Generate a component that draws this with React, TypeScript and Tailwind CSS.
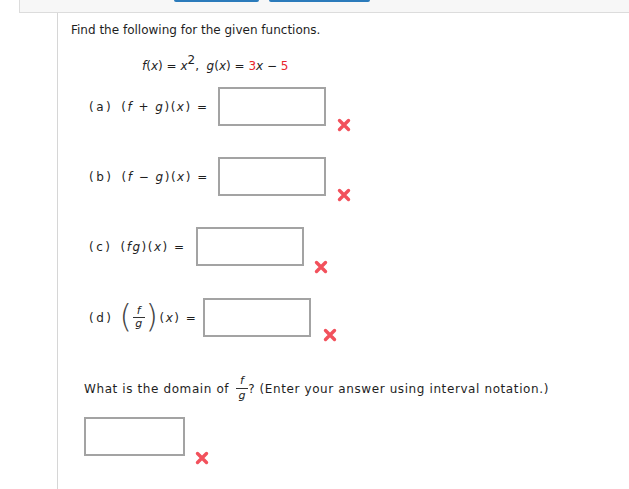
import React from "react";

// Worksheet question: function operations

function WrongMark() {
  return (
    <svg width="14" height="14" viewBox="0 0 14 14" className="shrink-0">
      <path d="M2.5 2.5 L11.5 11.5 M11.5 2.5 L2.5 11.5" stroke="#f2515c" strokeWidth="3.4" strokeLinecap="round" />
    </svg>
  );
}

function AnswerBox({ w = "w-[108px]" }: { w?: string }) {
  return <div className={`${w} h-[39px] border-2 border-[#a3a3a3] bg-white`} />;
}

function Frac({ tall = false }: { tall?: boolean }) {
  return (
    <span className="inline-flex flex-col items-center leading-none align-middle">
      <span className={`italic text-[11px] ${tall ? "leading-[14px]" : "leading-[12px]"}`}>f</span>
      <span className="block h-px w-[12px] bg-[#333]" />
      <span className={`italic text-[11px] ${tall ? "leading-[14px]" : "leading-[12px]"}`}>g</span>
    </span>
  );
}

function Label({ children }: { children: React.ReactNode }) {
  return <span className="tracking-[2.5px]">{children}</span>;
}

export default function App() {
  return (
    <div className="relative w-[629px] h-[489px] bg-white overflow-hidden text-[#1e1e1e] font-['DejaVu_Sans',Verdana,sans-serif] text-[12px]">
      {/* top toolbar */}
      <div className="ml-[19px] h-[13px] bg-[#f7f7f7] border-l border-b border-[#dcdcdc] flex">
        <div className="ml-[154px] w-[85px] h-[2px] bg-[#2b7bbb] rounded-b-sm" />
        <div className="ml-[10px] w-[101px] h-[2px] bg-[#2b7bbb] rounded-b-sm" />
      </div>

      <div className="ml-[57px] h-[476px] border-l border-[#d6d6d6] pl-[13px] pt-[10px]">
        <p className="leading-[14px]">Find the following for the given functions.</p>

        <p className="mt-[22px] ml-[71px] leading-[14px]">
          <i>f</i>(<i>x</i>) = <i>x</i>
          <sup className="text-[12px]">2</sup>,&nbsp; <i>g</i>(<i>x</i>) ={" "}
          <span className="text-[#e8262c]">3</span>
          <i>x</i> − <span className="text-[#e8262c]">5</span>
        </p>

        {/* (a) */}
        <div className="mt-[14px] flex">
          <div className="flex items-center ml-[18px] h-[39px]">
            <Label>(a)</Label>
            <span className="ml-[8px] tracking-[1.5px]">
              (<i>f</i> + <i>g</i>)(<i>x</i>) =
            </span>
          </div>
          <div className="ml-[9px]">
            <AnswerBox />
          </div>
          <div className="ml-[11px] mt-[31px]">
            <WrongMark />
          </div>
        </div>

        {/* (b) */}
        <div className="mt-[25px] flex">
          <div className="flex items-center ml-[18px] h-[39px]">
            <Label>(b)</Label>
            <span className="ml-[8px] tracking-[1.5px]">
              (<i>f</i> − <i>g</i>)(<i>x</i>) =
            </span>
          </div>
          <div className="ml-[9px]">
            <AnswerBox />
          </div>
          <div className="ml-[11px] mt-[31px]">
            <WrongMark />
          </div>
        </div>

        {/* (c) */}
        <div className="mt-[25px] flex">
          <div className="flex items-center ml-[18px] h-[39px]">
            <Label>(c)</Label>
            <span className="ml-[8px] tracking-[1.5px]">
              (<i>f</i><i>g</i>)(<i>x</i>) =
            </span>
          </div>
          <div className="ml-[10px]">
            <AnswerBox />
          </div>
          <div className="ml-[10px] mt-[33px]">
            <WrongMark />
          </div>
        </div>

        {/* (d) */}
        <div className="mt-[24px] flex">
          <div className="flex items-center ml-[18px] h-[39px]">
            <Label>(d)</Label>
            <span className="ml-[6px] flex items-center tracking-[1.5px]">
              <span className="text-[32px] font-extralight leading-none -mt-[3px] text-[#444]">(</span>
              <Frac />
              <span className="text-[32px] font-extralight leading-none -mt-[3px] text-[#444]">)</span>
              <span>
                (<i>x</i>) =
              </span>
            </span>
          </div>
          <div className="ml-[6px]">
            <AnswerBox />
          </div>
          <div className="ml-[12px] mt-[30px]">
            <WrongMark />
          </div>
        </div>

        {/* domain */}
        <div className="mt-[32px] ml-[13px] flex items-center tracking-[0.6px]">
          <span>What is the domain of</span>
          <span className="ml-[7px]">
            <Frac tall />
          </span>
          <span>? (Enter your answer using interval notation.)</span>
        </div>

        <div className="mt-[14px] ml-[13px] flex">
          <AnswerBox w="w-[101px]" />
          <div className="ml-[10px] mt-[34px]">
            <WrongMark />
          </div>
        </div>
      </div>
    </div>
  );
}
